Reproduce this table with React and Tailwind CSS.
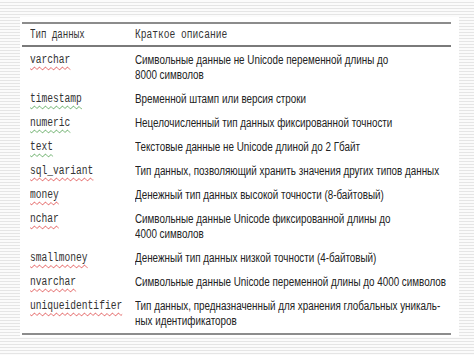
import React from "react";

const rows = [
  { t: "varchar", c: "red", d: ["Символьные данные не Unicode переменной длины до", "8000 символов"] },
  { t: "timestamp", c: "green", d: ["Временной штамп или версия строки"] },
  { t: "numeric", c: "green", d: ["Нецелочисленный тип данных фиксированной точности"] },
  { t: "text", c: "green", d: ["Текстовые данные не Unicode длиной до 2 Гбайт"] },
  { t: "sql_variant", c: "red", d: ["Тип данных, позволяющий хранить значения других типов данных"] },
  { t: "money", c: "red", d: ["Денежный тип данных высокой точности (8-байтовый)"] },
  { t: "nchar", c: "red", d: ["Символьные данные Unicode фиксированной длины до", "4000 символов"] },
  { t: "smallmoney", c: "red", d: ["Денежный тип данных низкой точности (4-байтовый)"] },
  { t: "nvarchar", c: "red", d: ["Символьные данные Unicode переменной длины до 4000 символов"] },
  { t: "uniqueidentifier", c: "red", d: ["Тип данных, предназначенный для хранения глобальных уникаль-", "ных идентификаторов"] },
];

const mono = { fontFamily: '"Liberation Mono", "DejaVu Sans Mono", monospace' };
const sans = { fontFamily: '"Liberation Sans", Arial, sans-serif' };

export default function App() {
  return (
    <div className="w-[474px] h-[355px] overflow-hidden bg-[image:repeating-linear-gradient(to_bottom,#fbfbfb_0px,#fbfbfb_2px,#e5e5e5_2px,#e5e5e5_3px)] pt-[17px] pl-[20px] pr-[15px]">
      <div className="bg-white w-[439px] h-[320px] pt-[5px] pl-[2px]">
        <div className="w-[429px] border-t-2 border-b-2 border-[#8c8c8c]">
          <div className="grid grid-cols-[105px_1fr] pl-[8px] h-[23px] items-center border-b-2 border-[#7a7a7a] text-[#333]">
            <div style={mono} className="text-[12px] origin-left scale-x-[0.76] whitespace-nowrap">Тип данных</div>
            <div style={mono} className="text-[12px] origin-left scale-x-[0.8] whitespace-nowrap">Краткое описание</div>
          </div>
          <div className="pt-[1px]">
            {rows.map((r) => (
              <div key={r.t} className="grid grid-cols-[105px_1fr] pl-[8px] py-[4.5px] leading-[15px]">
                <div style={mono} className="text-[12px] text-[#333] origin-left scale-x-[0.8] whitespace-nowrap">
                  <span
                    className={
                      "underline decoration-wavy decoration-1 underline-offset-[3px] " +
                      (r.c === "red" ? "decoration-[#e05050]" : "decoration-[#5aa55a]")
                    }
                  >
                    {r.t}
                  </span>
                </div>
                <div style={sans} className="text-[12px] text-[#222] origin-left scale-x-[0.82] whitespace-nowrap">
                  {r.d.map((l, i) => (
                    <div key={i}>{l}</div>
                  ))}
                </div>
              </div>
            ))}
          </div>
        </div>
      </div>
    </div>
  );
}
